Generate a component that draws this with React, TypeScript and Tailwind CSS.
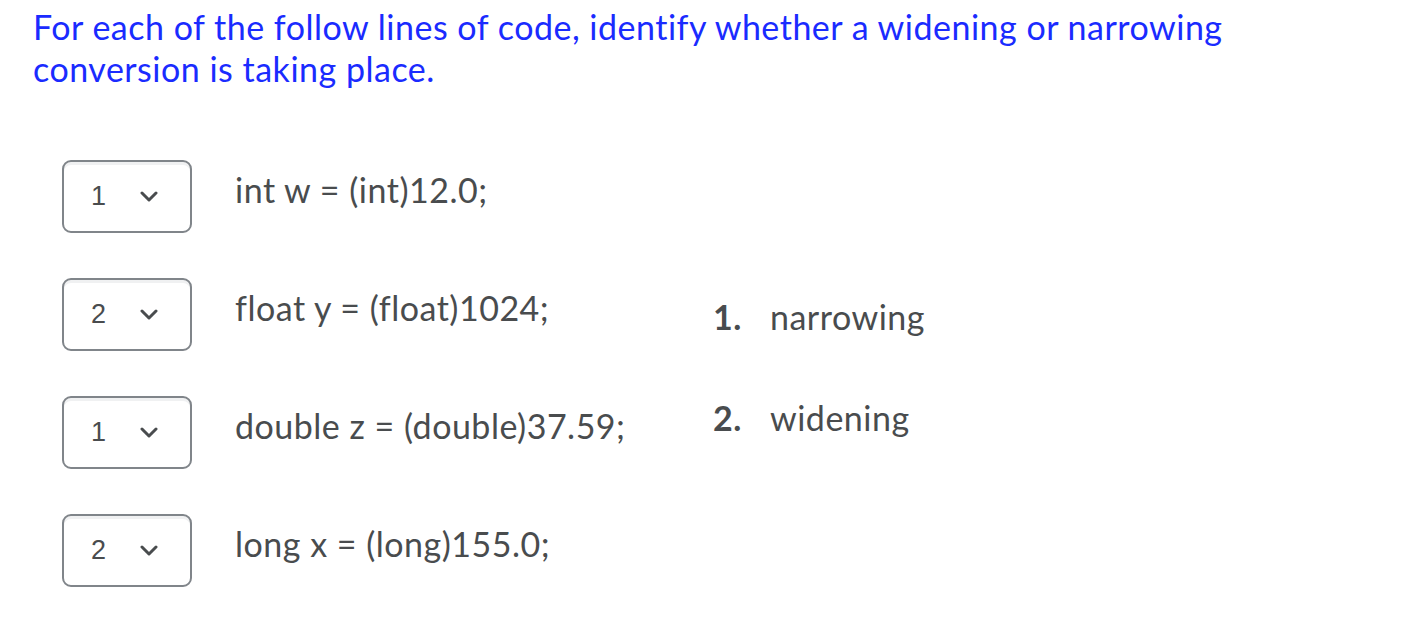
import { useState } from "react"

const lines = [
  { code: "int w = (int)12.0;", answer: "1" },
  { code: "float y = (float)1024;", answer: "2" },
  { code: "double z = (double)37.59;", answer: "1" },
  { code: "long x = (long)155.0;", answer: "2" },
]

const choices = ["narrowing", "widening"]

function Chevron() {
  return (
    <svg width="18" height="11" viewBox="0 0 18 11" fill="none">
      <path d="M2 2l7 7 7-7" stroke="#494c4e" strokeWidth="3" strokeLinecap="round" strokeLinejoin="round" />
    </svg>
  )
}

function AnswerSelect({ value }: { value: string }) {
  const [open, setOpen] = useState(false)
  return (
    <button
      type="button"
      onClick={() => setOpen(!open)}
      className="flex h-[73px] w-[130px] shrink-0 items-center rounded-[9px] border-2 border-[#80858a] bg-white pl-[27px] shadow-[inset_0_3px_0_#f0f1f2]"
    >
      <span className="w-[49px] text-left font-['Liberation_Sans',Arial,sans-serif] text-[27px] leading-none text-[#494c4e]">
        {value}
      </span>
      <Chevron />
    </button>
  )
}

export default function App() {
  return (
    <div className="min-h-[630px] bg-white pl-[33px] pt-[6px] font-['Lato','Open_Sans',sans-serif] tracking-[0.5px]">
      <p className="w-[1240px] text-[34px] leading-[42px] text-[#1a2bff]">
        For each of the follow lines of code, identify whether a widening or narrowing conversion is taking place.
      </p>

      <div className="mt-[70px] flex">
        <div className="flex w-[680px] flex-col gap-[45px] pl-[29px]">
          {lines.map((l, i) => (
            <div key={i} className="flex items-start">
              <AnswerSelect value={l.answer} />
              <span className="ml-[43px] mt-[10px] text-[34px] leading-[40px] text-[#494c4e]">{l.code}</span>
            </div>
          ))}
        </div>

        <ol className="flex flex-col gap-[61px] pt-[137px] text-[34px] leading-[40px] text-[#494c4e]">
          {choices.map((c, i) => (
            <li key={c} className="flex">
              <span className="w-[57px] font-bold">{i + 1}.</span>
              <span>{c}</span>
            </li>
          ))}
        </ol>
      </div>
    </div>
  )
}
